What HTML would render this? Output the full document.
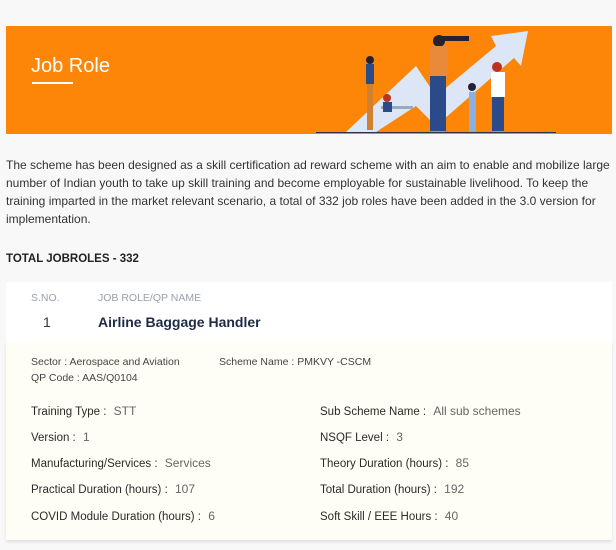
<!DOCTYPE html>
<html><head><style>
body{margin:0;width:616px;height:550px;background:#f8f8f9;font-family:"Liberation Sans",sans-serif;overflow:hidden;position:relative}
.ban{position:absolute;left:6px;top:26px;width:606px;height:108px;background:#fd8507}
.ban h1{position:absolute;left:25px;top:29px;margin:0;font-weight:normal;color:#fff;font-size:20px}
.ban .ul{position:absolute;left:26px;top:56px;width:41px;height:2px;background:#fff}
p{position:absolute;left:6px;top:156px;width:606px;margin:0;font-size:12px;line-height:18px;color:#333}
.tot{position:absolute;left:6px;top:253px;font-size:11.5px;font-weight:bold;color:#222}
.row{position:absolute;left:6px;top:282px;width:606px;height:60px;background:#fff}
.h{position:absolute;top:10px;font-size:10.5px;color:#9aa0ad}
.n{position:absolute;top:32px;font-size:14px;color:#333}
.nm{position:absolute;top:32px;font-size:14px;font-weight:bold;color:#1f2a44}
.box{position:absolute;left:6px;top:342px;width:606px;height:198px;background:#fffef6;box-shadow:0 2px 3px rgba(0,0,0,.1)}
.s{position:absolute;font-size:10.5px;color:#444}
.k{position:absolute;font-size:11.5px;color:#2a2a2a}
.k span{color:#666;margin-left:4px;font-size:12px}
</style></head><body>
<div class="ban"><h1>Job Role</h1><div class="ul"></div>
<svg style="position:absolute;left:310px;top:0" width="240" height="108" viewBox="0 0 240 108">
<polygon points="30,106 100,40 120,70 180,20 175,10 212,5 205,40 198,32 120,100 100,80 60,106" fill="#dce6f7"/>
<rect x="0" y="106" width="240" height="1" fill="#334"/>
<rect x="65" y="80" width="32" height="3" fill="#9ab"/>
<circle cx="71" cy="72" r="4" fill="#c03020"/><rect x="67" y="76" width="9" height="10" fill="#2a4a8a"/>
<circle cx="54" cy="34" r="4" fill="#223"/><rect x="50" y="38" width="8" height="20" fill="#2a4a8a"/><rect x="51" y="58" width="6" height="46" fill="#d08030"/>
<circle cx="123" cy="15" r="6" fill="#223"/><rect x="114" y="20" width="18" height="30" fill="#e88a3a"/><rect x="114" y="50" width="16" height="55" fill="#2a4a8a"/><rect x="123" y="10" width="30" height="5" fill="#223"/>
<circle cx="156" cy="61" r="4" fill="#223"/><rect x="153" y="66" width="7" height="40" fill="#8ab0e0"/>
<circle cx="181" cy="41" r="5" fill="#c03020"/><rect x="175" y="46" width="14" height="25" fill="#fff"/><rect x="176" y="71" width="12" height="34" fill="#2a4a8a"/>
</svg></div>
<p>The scheme has been designed as a skill certification ad reward scheme with an aim to enable and mobilize large number of Indian youth to take up skill training and become employable for sustainable livelihood. To keep the training imparted in the market relevant scenario, a total of 332 job roles have been added in the 3.0 version for implementation.</p>
<div class="tot">TOTAL JOBROLES - 332</div>
<div class="row"><div class="h" style="left:25px">S.NO.</div><div class="h" style="left:92px">JOB ROLE/QP NAME</div>
<div class="n" style="left:37px">1</div><div class="nm" style="left:92px">Airline Baggage Handler</div></div>
<div class="box">
<div class="s" style="left:25px;top:14px">Sector : Aerospace and Aviation</div>
<div class="s" style="left:213px;top:14px">Scheme Name : PMKVY -CSCM</div>
<div class="s" style="left:25px;top:30px">QP Code : AAS/Q0104</div>
<div class="k" style="left:25px;top:62px">Training Type : <span>STT</span></div>
<div class="k" style="left:314px;top:62px">Sub Scheme Name : <span>All sub schemes</span></div>
<div class="k" style="left:25px;top:88px">Version : <span>1</span></div>
<div class="k" style="left:314px;top:88px">NSQF Level : <span>3</span></div>
<div class="k" style="left:25px;top:114px">Manufacturing/Services : <span>Services</span></div>
<div class="k" style="left:314px;top:114px">Theory Duration (hours) : <span>85</span></div>
<div class="k" style="left:25px;top:140px">Practical Duration (hours) : <span>107</span></div>
<div class="k" style="left:314px;top:140px">Total Duration (hours) : <span>192</span></div>
<div class="k" style="left:25px;top:167px">COVID Module Duration (hours) : <span>6</span></div>
<div class="k" style="left:314px;top:167px">Soft Skill / EEE Hours : <span>40</span></div>
</div>
</body></html>
